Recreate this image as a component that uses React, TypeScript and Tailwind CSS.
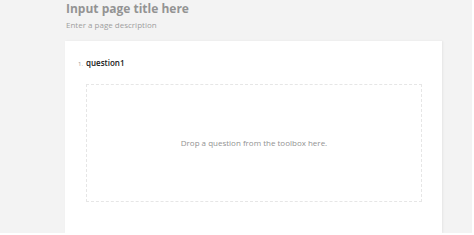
export default function App() {
  return (
    <div
      className="relative w-[474px] h-[235px] overflow-hidden bg-white"
      style={{ fontFamily: '"Open Sans", "Liberation Sans", sans-serif' }}
    >
      <div className="flex flex-col w-[472px] h-[233px] bg-[#f3f3f3] overflow-hidden">
        <div className="pl-[66px] pt-[1px]">
          <div className="text-[12px] leading-[16px] font-bold text-[#939393]">Input page title here</div>
          <div className="mt-[2px] text-[8px] leading-[12px] text-[#9e9e9e]">Enter a page description</div>
        </div>
        <div className="ml-[65px] mt-[10px] w-[377px] flex-1 bg-white shadow-[1px_0_2px_rgba(0,0,0,0.06)] pt-[16px] pl-[13px] pr-[20px]">
          <div className="flex items-baseline h-[12px]">
            <span className="w-[8px] text-[6px] text-[#9a9a9a]">1.</span>
            <span className="text-[8px] leading-[12px] font-semibold text-[#161616]">question1</span>
          </div>
          <div className="ml-[8px] mt-[15px] h-[118px] border border-dashed border-[#e6e6e6] flex items-center justify-center">
            <span className="text-[8px] text-[#929292]">Drop a question from the toolbox here.</span>
          </div>
        </div>
      </div>
    </div>
  );
}
